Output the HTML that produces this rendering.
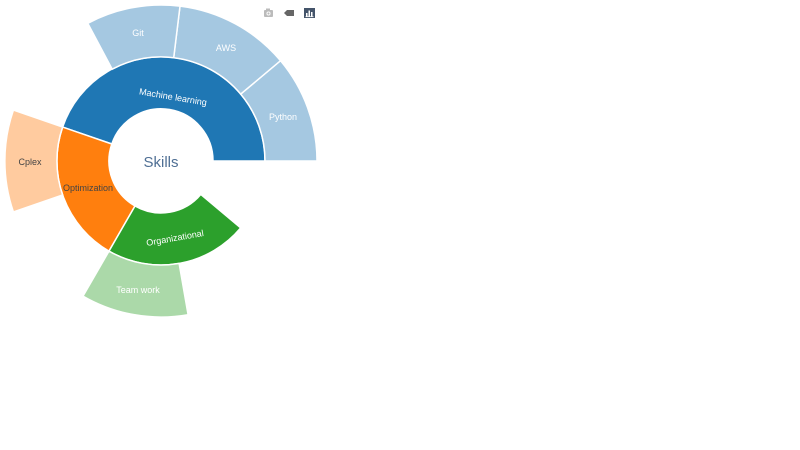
<!DOCTYPE html>
<html><head><meta charset="utf-8"><style>
html,body{margin:0;padding:0;background:#fff;width:800px;height:450px;overflow:hidden}
svg{position:absolute;left:0;top:0}
text{font-family:"Liberation Sans",sans-serif}
</style></head><body>
<svg width="800" height="450" viewBox="0 0 800 450">
<g stroke="#fff" stroke-width="1.5">
<path d="M213,161 L265,161 A104,104 0 0 0 62.6,127.1 L111.8,144.0 A52,52 0 0 1 213,161 Z" fill="#1f77b4"/>
<path d="M111.8,144.0 L62.6,127.1 A104,104 0 0 0 109,251.1 L135,206.0 A52,52 0 0 1 111.8,144.0 Z" fill="#ff7f0e"/>
<path d="M135,206.0 L109,251.1 A104,104 0 0 0 240.7,227.9 L200.8,194.4 A52,52 0 0 1 135,206.0 Z" fill="#2ca02c"/>
<path d="M265,161 L317,161 A156,156 0 0 0 280.5,60.7 L240.7,94.1 A104,104 0 0 1 265,161 Z" fill="#a5c8e1"/>
<path d="M240.7,94.1 L280.5,60.7 A156,156 0 0 0 180.0,6.1 L173.7,57.7 A104,104 0 0 1 240.7,94.1 Z" fill="#a5c8e1"/>
<path d="M173.7,57.7 L180.0,6.1 A156,156 0 0 0 87.8,23.3 L112.2,69.2 A104,104 0 0 1 173.7,57.7 Z" fill="#a5c8e1"/>
<path d="M62.6,127.1 L13.4,110.1 A156,156 0 0 0 13.4,211.9 L62.6,194.9 A104,104 0 0 1 62.6,127.1 Z" fill="#ffcb9f"/>
<path d="M109,251.1 L83,296.1 A156,156 0 0 0 188.1,314.7 L179.1,263.4 A104,104 0 0 1 109,251.1 Z" fill="#abd9a9"/>
</g>
<g font-size="9" text-anchor="middle">
<text x="173" y="100" fill="#fff" transform="rotate(9.5 173 97)">Machine learning</text>
<text x="88" y="191" fill="#444">Optimization</text>
<text x="175" y="241" fill="#fff" transform="rotate(-10 175 238)">Organizational</text>
<text x="138" y="36" fill="#fff">Git</text>
<text x="226" y="51" fill="#fff">AWS</text>
<text x="283" y="120" fill="#fff">Python</text>
<text x="30" y="165" fill="#444">Cplex</text>
<text x="138" y="293" fill="#fff">Team work</text>
</g>
<text x="161" y="167" font-size="15" text-anchor="middle" fill="#4f6f94">Skills</text>
<!-- modebar -->
<g>
<rect x="264" y="10" width="9" height="7" rx="1" fill="#bbb"/>
<rect x="266" y="8.5" width="4" height="2" fill="#bbb"/>
<circle cx="268.5" cy="13.5" r="2" fill="#fff"/>
<circle cx="268.5" cy="13.5" r="1.1" fill="#bbb"/>
<path d="M284,13 L287,10 L294,10 L294,16 L287,16 Z" fill="#666"/>
<rect x="304" y="8" width="11" height="10" fill="#44546a"/>
<rect x="306" y="13" width="1.5" height="3.5" fill="#fff"/>
<rect x="308.5" y="10.5" width="1.5" height="6" fill="#fff"/>
<rect x="311" y="12" width="1.5" height="4.5" fill="#fff"/>
<rect x="305.5" y="16.3" width="8" height="0.8" fill="#fff"/>
</g>
</svg>
</body></html>
